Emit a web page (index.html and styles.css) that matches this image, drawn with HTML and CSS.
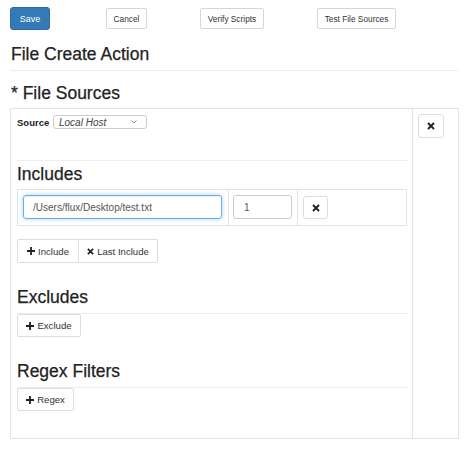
FILE: index.html
```html
<!DOCTYPE html>
<html>
<head>
<meta charset="utf-8">
<link rel="stylesheet" href="styles.css">
</head>
<body>
<div class="toolbar">
  <button class="btn btn-primary save">Save</button>
  <button class="btn tb cancel">Cancel</button>
  <button class="btn tb verify">Verify Scripts</button>
  <button class="btn tb test">Test File Sources</button>
</div>
<div class="page">
  <h3 class="title">File Create Action</h3>
  <h3 class="sources-title">* File Sources</h3>
  <div class="sources">
    <div class="source-main">
      <div class="source-row">
        <label class="source-label">Source</label>
        <div class="select"><span>Local Host</span><svg class="chev" width="6" height="4" viewBox="0 0 6 4"><path d="M0.5 0.5L3 3L5.5 0.5" fill="none" stroke="#888" stroke-width="0.9"/></svg></div>
      </div>
      <div class="sep"></div>
      <h4 class="sub">Includes</h4>
      <div class="inc-table">
        <div class="cell c1"><div class="input focus">/Users/flux/Desktop/test.txt</div></div>
        <div class="cell c2"><div class="input num">1</div></div>
        <div class="cell c3"><button class="btn icon-btn row-x"><svg width="8" height="8" viewBox="0 0 8 8"><path d="M1 1L7 7M7 1L1 7" stroke="#222" stroke-width="1.9"/></svg></button></div>
      </div>
      <div class="btn-group">
        <button class="btn act inc"><svg width="8" height="8" viewBox="0 0 8 8"><path d="M4 0V8M0 4H8" stroke="#222" stroke-width="1.8"/></svg><span>Include</span></button>
        <button class="btn act last"><svg width="7" height="7" viewBox="0 0 8 8"><path d="M1 1L7 7M7 1L1 7" stroke="#222" stroke-width="2"/></svg><span>Last Include</span></button>
      </div>
      <h4 class="sub ruled excl">Excludes</h4>
      <button class="btn act single exc"><svg width="8" height="8" viewBox="0 0 8 8"><path d="M4 0V8M0 4H8" stroke="#222" stroke-width="1.8"/></svg><span>Exclude</span></button>
      <h4 class="sub ruled regex">Regex Filters</h4>
      <button class="btn act single rgx"><svg width="8" height="8" viewBox="0 0 8 8"><path d="M4 0V8M0 4H8" stroke="#222" stroke-width="1.8"/></svg><span>Regex</span></button>
    </div>
    <div class="source-side">
      <button class="btn icon-btn side-x"><svg width="8" height="8" viewBox="0 0 8 8"><path d="M1 1L7 7M7 1L1 7" stroke="#222" stroke-width="1.9"/></svg></button>
    </div>
  </div>
</div>
</body>
</html>
```
FILE: styles.css
```css
* { box-sizing: border-box; }
html, body { margin: 0; padding: 0; background: #fff; }
body {
  font-family: "Liberation Sans", Arial, sans-serif;
  color: #333;
  width: 474px;
  height: 450px;
  overflow: hidden;
}
.btn {
  font-family: inherit;
  background: #fff;
  border: 1px solid #ccc;
  border-radius: 3px;
  color: #333;
  padding: 0;
  margin: 0;
  display: inline-flex;
  align-items: center;
  justify-content: center;
  cursor: pointer;
}
.toolbar {
  display: flex;
  align-items: center;
  padding: 7px 0 0 10px;
  height: 30px;
}
.save {
  width: 40px;
  height: 23px;
  background: #337ab7;
  border-color: #2e6da4;
  color: #fff;
  font-size: 9px;
  border-radius: 3px;
}
.tb {
  height: 21px;
  font-size: 8.3px;
  border-color: #d6d6d6;
  border-radius: 2px;
}
.cancel { width: 41px; margin-left: 56px; }
.verify { width: 64px; margin-left: 53px; }
.test { width: 79px; margin-left: 53px; }

.page {
  margin-left: 10px;
  width: 449px;
}
.title, .sources-title, .sub {
  font-size: 17.5px;
  font-weight: normal;
  line-height: 20px;
  margin: 0;
  color: #222;
  -webkit-text-stroke: 0.25px #222;
}
.title {
  margin-top: 14px;
  padding-bottom: 6px;
  border-bottom: 1px solid #eee;
  padding-left: 1px;
}
.sources-title {
  margin-top: 12px;
  margin-bottom: 5px;
  padding-left: 1px;
}
.sources {
  display: grid;
  grid-template-columns: 401px 46px;
  border: 1px solid #e3e3e3;
  height: 331px;
}
.source-main {
  padding: 6px 5px 0 6px;
}
.source-side {
  border-left: 1px solid #e3e3e3;
  padding: 5px 0 0 5px;
}
.source-row {
  display: flex;
  align-items: center;
  height: 14px;
}
.source-label {
  font-weight: bold;
  font-size: 9.5px;
  width: 36px;
  color: #222;
}
.select {
  width: 94px;
  height: 14px;
  border: 1px solid #ccc;
  border-radius: 3px;
  display: flex;
  align-items: center;
  justify-content: space-between;
  padding: 0 9px 0 5px;
  font-style: italic;
  font-size: 10px;
  color: #444;
}
.sep {
  margin-top: 31px;
  border-top: 1px solid #eee;
  width: 391px;
}
.sub {
  margin-top: 3px;
  margin-bottom: 5px;
}
.inc-table {
  display: grid;
  grid-template-columns: 210px 69px 1fr;
  border: 1px solid #e3e3e3;
  width: 390px;
}
.cell {
  padding: 5px 0 6px 5px;
  height: 35px;
}
.c2 { border-left: 1px solid #e3e3e3; padding-left: 4px; }
.c3 { border-left: 1px solid #e3e3e3; padding-left: 5px; padding-top: 6px; }
.input {
  height: 24px;
  border: 1px solid #ccc;
  border-radius: 3px;
  font-size: 10px;
  color: #555;
  display: flex;
  align-items: center;
  padding-left: 9px;
}
.c1 .input { width: 199px; }
.input.num { width: 59px; padding-left: 10px; }
.input.focus {
  border-color: #66afe9;
  box-shadow: inset 0 1px 1px rgba(0,0,0,.075), 0 0 4px rgba(102,175,233,.6);
}
.icon-btn {
  width: 26px;
  height: 24px;
  border-color: #ddd;
}
.row-x { width: 25px; height: 23px; }
.btn-group {
  display: flex;
  margin-top: 13px;
}
.act {
  height: 24px;
  font-size: 9.6px;
  border-color: #ddd;
  gap: 3px;
}
.inc {
  width: 62px;
  border-radius: 2px 0 0 2px;
}
.last {
  width: 79px;
  border-left: none;
  border-radius: 0 2px 2px 0;
}
.ruled {
  margin-top: 24px;
  margin-bottom: 0;
  padding-bottom: 6px;
  border-bottom: 1px solid #eee;
  width: 391px;
}
.single { height: 23px; border-radius: 2px; }
.exc { width: 64px; }
.rgx { width: 57px; }
```
